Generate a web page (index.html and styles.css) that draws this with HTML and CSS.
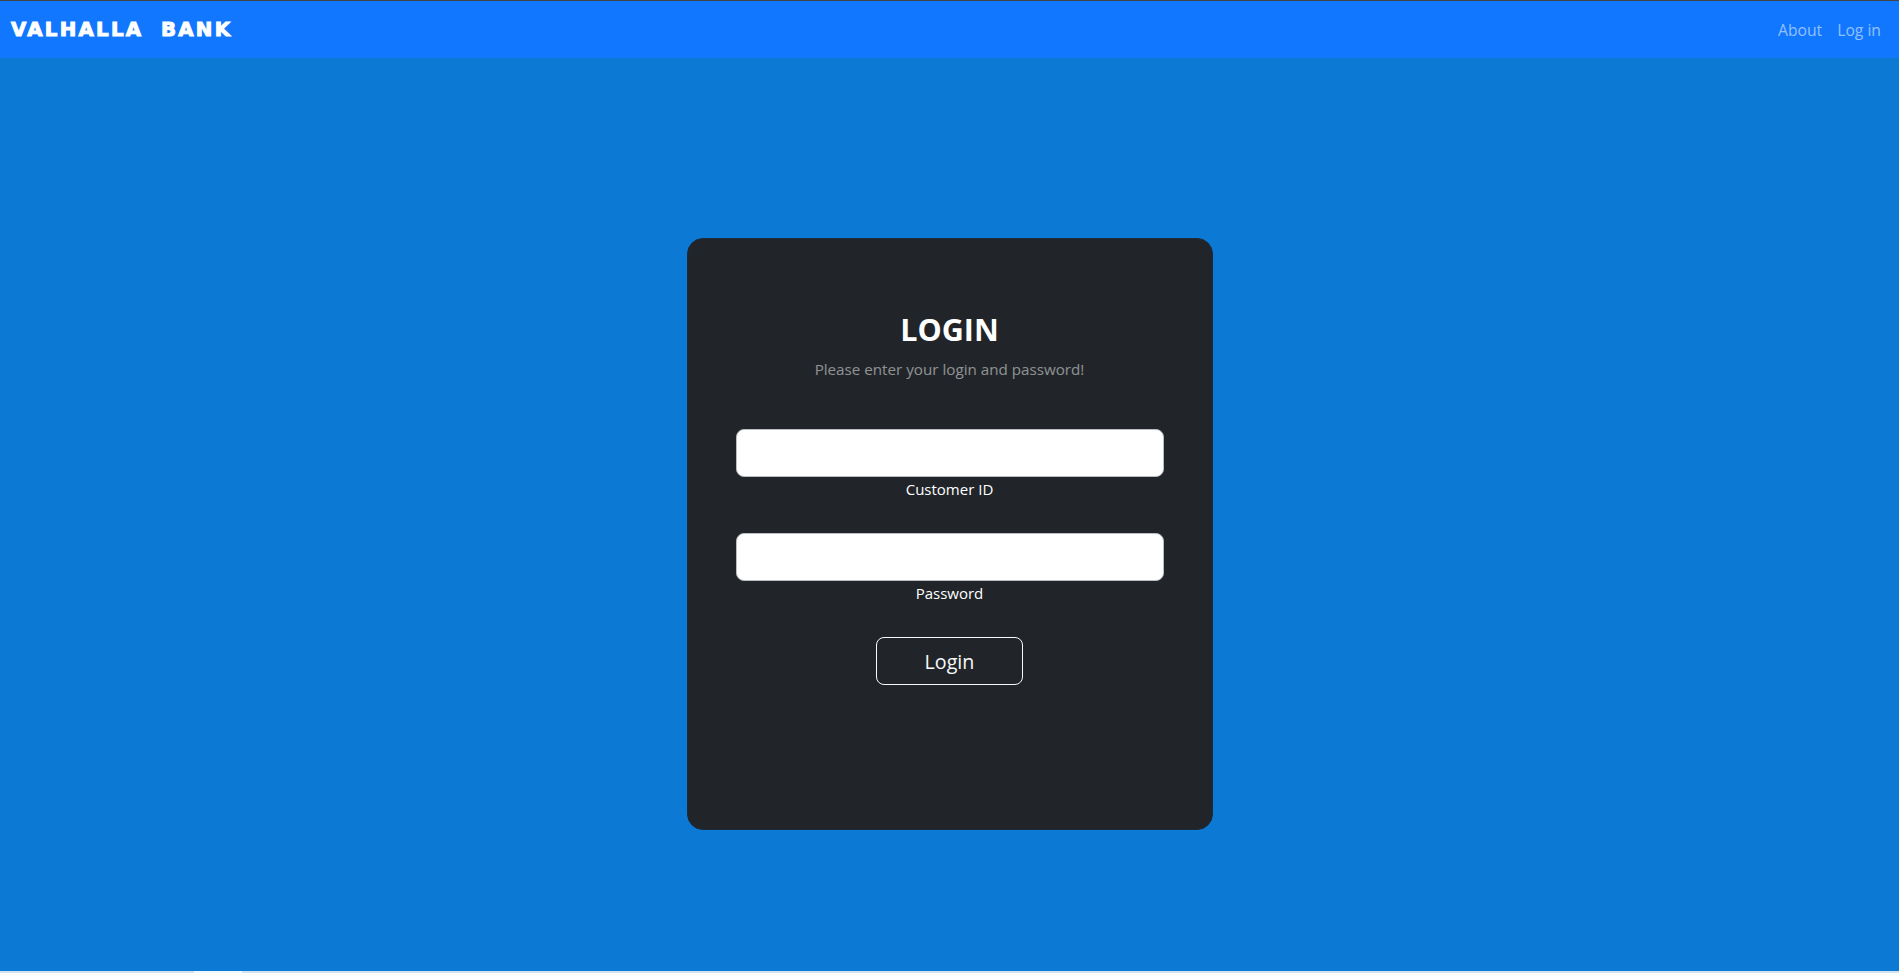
FILE: index.html
```html
<!DOCTYPE html>
<html lang="en">
<head>
<meta charset="utf-8">
<title>Valhalla Bank</title>
<link rel="stylesheet" href="styles.css">
</head>
<body>
<div class="page">
  <nav class="navbar">
    <a class="brand" href="#">VALHALLA BANK</a>
    <div class="nav-links">
      <a href="#">About</a>
      <a href="#">Log in</a>
    </div>
  </nav>
  <main class="main">
    <form class="card">
      <h2 class="title">LOGIN</h2>
      <p class="subtitle">Please enter your login and password!</p>
      <div class="field">
        <input class="input" type="text" id="cid">
        <label class="label" for="cid">Customer ID</label>
      </div>
      <div class="field">
        <input class="input" type="password" id="pwd">
        <label class="label" for="pwd">Password</label>
      </div>
      <button class="btn" type="button">Login</button>
    </form>
  </main>
  <div class="strip"><span class="strip-light"></span></div>
</div>
</body>
</html>
```
FILE: styles.css
```css
* { box-sizing: border-box; }
html, body { margin: 0; height: 100%; }
body { font-family: "Open Sans", "Noto Sans", sans-serif; background: #0c79d5; color: #fff; overflow: hidden; }
.page { height: 100vh; display: flex; flex-direction: column; }
.navbar { height: 58px; flex: none; background: #1277ff; border-top: 1px solid #444; display: flex; align-items: center; justify-content: space-between; padding: 0 18px 0 11px; }
.brand { margin-bottom: 2px; font-family: "DejaVu Sans", "Liberation Sans", sans-serif; font-weight: 700; font-size: 19px; letter-spacing: 2.2px; word-spacing: 8px; color: #fff; text-decoration: none; -webkit-text-stroke: 1px #fff; display: inline-block; transform: scaleX(1.04); transform-origin: left center; }
.nav-links { display: flex; gap: 15px; }
.nav-links a { color: rgba(255,255,255,.55); text-decoration: none; font-size: 15.7px; }
.main { flex: 1; display: flex; flex-direction: column; align-items: center; padding-top: 180px; }
.card { width: 526px; height: 592px; background: #212529; border: 1px solid #1c2a3a; border-radius: 16px; padding: 70px 48px 0; display: flex; flex-direction: column; align-items: center; }
.title { margin: 0; font-size: 30.5px; line-height: 40px; font-weight: 700; }
.subtitle { margin: 8px 0 0; font-size: 15.2px; line-height: 24px; color: rgba(255,255,255,.5); }
.field { width: 100%; display: flex; flex-direction: column; align-items: center; }
.subtitle + .field { margin-top: 48px; }
.field + .field { margin-top: 32px; }
.input { width: 100%; height: 48px; background: #fff; border: 1px solid #b9bec4; border-radius: 8px; padding: 0 16px; outline: none; display: block; }
.label { font-size: 15px; line-height: 24px; color: #fff; }
.btn { margin-top: 32px; width: 147px; height: 48px; background: transparent; border: 1px solid #f8f9fa; border-radius: 8px; color: #f8f9fa; font: inherit; font-size: 19.7px; }
.strip { height: 2px; flex: none; background: #d3e3ee; }
.strip-light { display: block; width: 48px; height: 100%; margin-left: 194px; background: #f0f8fc; }
```
